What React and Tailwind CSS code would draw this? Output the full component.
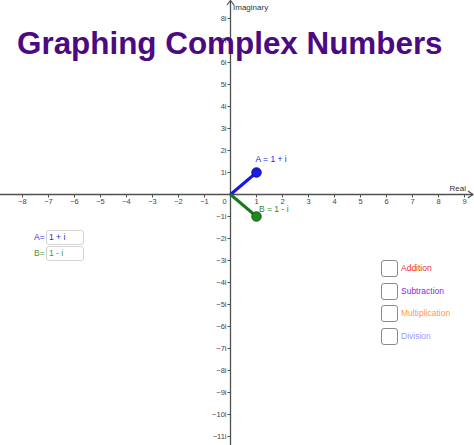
import React from 'react';

const OX = 230.5;
const OY = 194.5;
const UX = 26;
const UY = 22;

const xTicks = [-8, -7, -6, -5, -4, -3, -2, -1, 1, 2, 3, 4, 5, 6, 7, 8, 9];
const yTicks = [8, 7, 6, 5, 4, 3, 2, 1, -1, -2, -3, -4, -5, -6, -7, -8, -9, -10, -11];

const fmt = (n) => (n < 0 ? '\u2212' + Math.abs(n) : String(n));

const operations = [
  { label: 'Addition', color: 'text-[#e8312f]' },
  { label: 'Subtraction', color: 'text-[#8a2be2]' },
  { label: 'Multiplication', color: 'text-[#ff9a3c]' },
  { label: 'Division', color: 'text-[#9c9cf5]' },
];

function Graph() {
  return (
    <svg width="474" height="445" viewBox="0 0 474 445" className="block" style={{ fontFamily: '"Liberation Sans", Arial, sans-serif' }}>
      {/* axes */}
      <line x1="0" y1={OY} x2="473" y2={OY} stroke="#505050" strokeWidth="1.3" />
      <line x1={OX} y1="1" x2={OX} y2="445" stroke="#505050" strokeWidth="1.3" />
      <polyline points={`468,${OY - 3.5} 473,${OY} 468,${OY + 3.5}`} fill="none" stroke="#505050" strokeWidth="1.2" />
      <polyline points={`${OX - 3.5},5 ${OX},0.5 ${OX + 3.5},5`} fill="none" stroke="#505050" strokeWidth="1.2" />

      {xTicks.map((n) => {
        const x = OX + n * UX;
        return (
          <g key={'x' + n}>
            <line x1={x} y1={OY} x2={x} y2={OY + 3} stroke="#505050" strokeWidth="1" />
            <text x={x} y={OY + 9.5} fontSize="7.5" fill="#444" textAnchor="middle">{fmt(n)}</text>
          </g>
        );
      })}
      <text x={OX - 6} y={OY + 9.5} fontSize="7.5" fill="#444" textAnchor="middle">0</text>

      {yTicks.map((n) => {
        const y = OY - n * UY;
        return (
          <g key={'y' + n}>
            <line x1={OX - 3} y1={y} x2={OX} y2={y} stroke="#505050" strokeWidth="1" />
            <text x={OX - 4} y={y + 2.7} fontSize="7.5" fill="#444" textAnchor="end">{fmt(n) + 'i'}</text>
          </g>
        );
      })}

      <text x="449.5" y="191" fontSize="8" fill="#333">Real</text>
      <text x="233" y="9.5" fontSize="8" fill="#333">Imaginary</text>

      {/* vectors */}
      <line x1={OX} y1={OY} x2={OX + UX} y2={OY - UY} stroke="#1717e6" strokeWidth="3" />
      <line x1={OX} y1={OY} x2={OX + UX} y2={OY + UY} stroke="#187a18" strokeWidth="3" />
      <circle cx={OX + UX} cy={OY - UY} r="4.8" fill="#1a1ae8" stroke="#0a0a90" strokeWidth="0.8" />
      <circle cx={OX + UX} cy={OY + UY} r="4.8" fill="#1f8a1f" stroke="#0b4d0b" strokeWidth="0.8" />
      <text x="255.5" y="162" fontSize="8.5" fill="#2222dd">A = 1 + i</text>
      <text x="259" y="212" fontSize="8.5" fill="#2c8a2c">B = 1 - i</text>
    </svg>
  );
}

export default function App() {
  return (
    <div className="relative w-[474px] h-[445px] bg-white overflow-hidden font-['Liberation_Sans',Arial,sans-serif]">
      <Graph />

      {/* title */}
      <h1 className="absolute left-[17px] top-[28px] text-[31.4px] leading-none font-bold text-[#4b0a82] whitespace-nowrap">
        Graphing Complex Numbers
      </h1>

      {/* inputs */}
      <div className="absolute left-[34px] top-[230px] flex flex-col gap-[1px]">
        <div className="flex items-center">
          <span className="text-[8.5px] text-[#3030d0] w-[12px]">A=</span>
          <div className="w-[38px] h-[15px] bg-white border border-[#d4d4d4] rounded-[3px] flex items-center pl-[2px] text-[8.5px] text-[#2a2acc]">1 + i</div>
        </div>
        <div className="flex items-center">
          <span className="text-[8.5px] text-[#3a9a3a] w-[12px]">B=</span>
          <div className="w-[38px] h-[15px] bg-white border border-[#d4d4d4] rounded-[3px] flex items-center pl-[2px] text-[8.5px] text-[#3a9a3a]">1 - i</div>
        </div>
      </div>

      {/* checkboxes */}
      <div className="absolute left-[381px] top-[260px] flex flex-col gap-[5.5px]">
        {operations.map((op) => (
          <label key={op.label} className="flex items-center gap-[3px]">
            <span className="w-[17px] h-[17px] bg-white border border-[#8a8a8a] rounded-[3px]" />
            <span className={`text-[8.5px] ${op.color}`}>{op.label}</span>
          </label>
        ))}
      </div>
    </div>
  );
}
